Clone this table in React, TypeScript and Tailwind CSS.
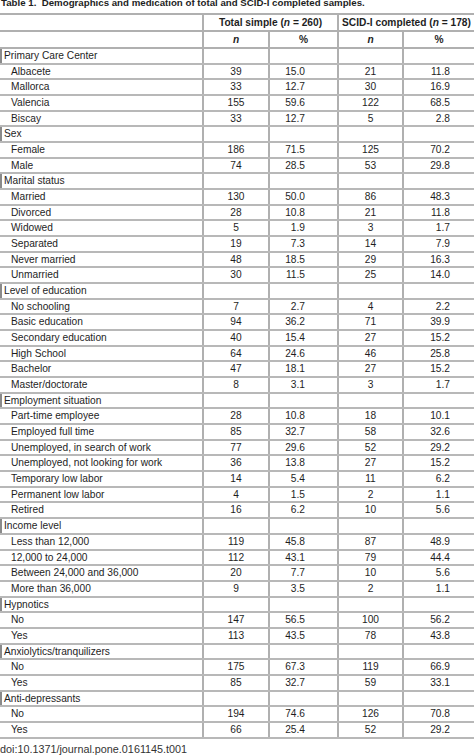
import React from 'react';

type Row = { label: string; cat?: boolean; v?: [string, string, string, string] };

const rows: Row[] = [
  { label: 'Primary Care Center', cat: true },
  { label: 'Albacete', v: ['39', '15.0', '21', '11.8'] },
  { label: 'Mallorca', v: ['33', '12.7', '30', '16.9'] },
  { label: 'Valencia', v: ['155', '59.6', '122', '68.5'] },
  { label: 'Biscay', v: ['33', '12.7', '5', '2.8'] },
  { label: 'Sex', cat: true },
  { label: 'Female', v: ['186', '71.5', '125', '70.2'] },
  { label: 'Male', v: ['74', '28.5', '53', '29.8'] },
  { label: 'Marital status', cat: true },
  { label: 'Married', v: ['130', '50.0', '86', '48.3'] },
  { label: 'Divorced', v: ['28', '10.8', '21', '11.8'] },
  { label: 'Widowed', v: ['5', '1.9', '3', '1.7'] },
  { label: 'Separated', v: ['19', '7.3', '14', '7.9'] },
  { label: 'Never married', v: ['48', '18.5', '29', '16.3'] },
  { label: 'Unmarried', v: ['30', '11.5', '25', '14.0'] },
  { label: 'Level of education', cat: true },
  { label: 'No schooling', v: ['7', '2.7', '4', '2.2'] },
  { label: 'Basic education', v: ['94', '36.2', '71', '39.9'] },
  { label: 'Secondary education', v: ['40', '15.4', '27', '15.2'] },
  { label: 'High School', v: ['64', '24.6', '46', '25.8'] },
  { label: 'Bachelor', v: ['47', '18.1', '27', '15.2'] },
  { label: 'Master/doctorate', v: ['8', '3.1', '3', '1.7'] },
  { label: 'Employment situation', cat: true },
  { label: 'Part-time employee', v: ['28', '10.8', '18', '10.1'] },
  { label: 'Employed full time', v: ['85', '32.7', '58', '32.6'] },
  { label: 'Unemployed, in search of work', v: ['77', '29.6', '52', '29.2'] },
  { label: 'Unemployed, not looking for work', v: ['36', '13.8', '27', '15.2'] },
  { label: 'Temporary low labor', v: ['14', '5.4', '11', '6.2'] },
  { label: 'Permanent low labor', v: ['4', '1.5', '2', '1.1'] },
  { label: 'Retired', v: ['16', '6.2', '10', '5.6'] },
  { label: 'Income level', cat: true },
  { label: 'Less than 12,000', v: ['119', '45.8', '87', '48.9'] },
  { label: '12,000 to 24,000', v: ['112', '43.1', '79', '44.4'] },
  { label: 'Between 24,000 and 36,000', v: ['20', '7.7', '10', '5.6'] },
  { label: 'More than 36,000', v: ['9', '3.5', '2', '1.1'] },
  { label: 'Hypnotics', cat: true },
  { label: 'No', v: ['147', '56.5', '100', '56.2'] },
  { label: 'Yes', v: ['113', '43.5', '78', '43.8'] },
  { label: 'Anxiolytics/tranquilizers', cat: true },
  { label: 'No', v: ['175', '67.3', '119', '66.9'] },
  { label: 'Yes', v: ['85', '32.7', '59', '33.1'] },
  { label: 'Anti-depressants', cat: true },
  { label: 'No', v: ['194', '74.6', '126', '70.8'] },
  { label: 'Yes', v: ['66', '25.4', '52', '29.2'] },
];

const font = { fontFamily: '"Liberation Sans", Arial, sans-serif' };

export default function App() {
  return (
    <div className="w-[474px] h-[755px] overflow-hidden bg-white text-[#1e1e1e]" style={font}>
      <div className="h-[13px] overflow-hidden">
        <div className="mt-[-3px] pl-[1px] text-[9.7px] leading-[12px] font-bold whitespace-nowrap">
          Table 1.&nbsp; Demographics and medication of total and SCID-I completed samples.
        </div>
      </div>

      <div className="border-t-2 border-[#b0b0b0]">
        <div className="flex h-[17px] border-b-2 border-[#b0b0b0] text-[10.2px] font-bold leading-[15px]">
          <div className="w-[202px]" />
          <div className="w-[135px] border-l-2 border-[#b0b0b0] text-center whitespace-nowrap">
            Total simple (<i>n</i> = 260)
          </div>
          <div className="flex-1 border-l-2 border-[#b0b0b0] text-center whitespace-nowrap">
            SCID-I completed (<i>n</i> = 178)
          </div>
        </div>
        <div className="flex h-[17px] border-b-2 border-[#b0b0b0] text-[10.2px] font-bold leading-[15px]">
          <div className="w-[202px]" />
          <div className="w-[66px] border-l-2 border-[#b0b0b0] text-center italic">n</div>
          <div className="w-[69px] border-l-2 border-[#b0b0b0] text-center">%</div>
          <div className="w-[65px] border-l-2 border-[#b0b0b0] text-center italic">n</div>
          <div className="flex-1 border-l-2 border-[#b0b0b0] text-center">%</div>
        </div>

        {rows.map((r, i) => (
          <div key={i} className="flex h-[15.68px] border-b-2 border-[#b8b8b8] text-[10.2px] leading-[13.5px]">
            <div
              className={
                r.cat
                  ? 'w-[202px] pl-[2px] border-l-2 border-[#8a8a8a] whitespace-nowrap'
                  : 'w-[202px] pl-[11px] whitespace-nowrap'
              }
            >
              {r.label}
            </div>
            <div className="w-[66px] border-l-2 border-[#b0b0b0] text-center">{r.v?.[0]}</div>
            <div className="w-[69px] border-l-2 border-[#b0b0b0] text-right pr-[32px]">{r.v?.[1]}</div>
            <div className="w-[65px] border-l-2 border-[#b0b0b0] text-center">{r.v?.[2]}</div>
            <div className="flex-1 border-l-2 border-[#b0b0b0] text-right pr-[24px]">{r.v?.[3]}</div>
          </div>
        ))}
      </div>

      <div className="mt-[4px] text-[10.8px] leading-[13px] text-[#333]">
        doi:10.1371/journal.pone.0161145.t001
      </div>
    </div>
  );
}
